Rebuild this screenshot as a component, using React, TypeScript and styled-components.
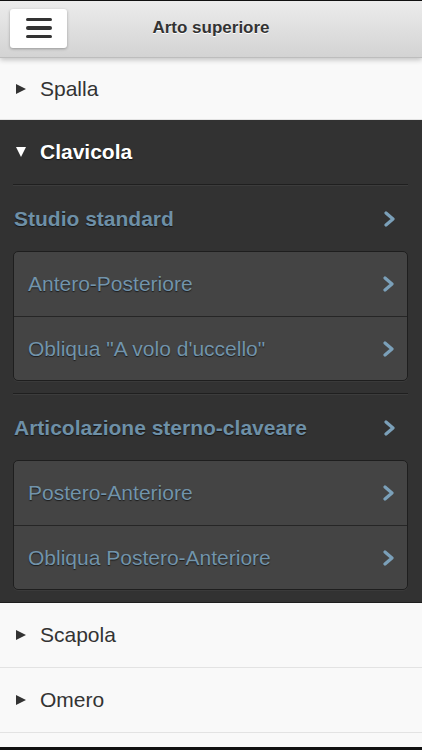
import styled, { createGlobalStyle } from "styled-components";

const GlobalStyle = createGlobalStyle`
  html, body {
    margin: 0;
    padding: 0;
    background: #000;
  }
  * { box-sizing: border-box; }
`;

const Page = styled.div`
  height: 750px;
  display: flex;
  flex-direction: column;
  background: #f9f9f9;
  border-top: 1px solid #111;
  border-bottom: 3px solid #111;
  font-family: "Liberation Sans", Arial, Helvetica, sans-serif;
  overflow: hidden;
`;

const Header = styled.header`
  position: relative;
  z-index: 2;
  height: 57px;
  flex-shrink: 0;
  display: flex;
  align-items: center;
  padding: 0 10px;
  background: linear-gradient(#ececec, #d3d3d3);
  border-bottom: 1px solid #bdbdbd;
  box-shadow: 0 2px 5px rgba(0, 0, 0, 0.22);
`;

const MenuButton = styled.button`
  width: 57px;
  height: 39px;
  margin-top: -2px;
  border: none;
  border-radius: 3px;
  background: #fff;
  box-shadow: 0 1px 3px rgba(0, 0, 0, 0.3);
  display: flex;
  flex-direction: column;
  justify-content: center;
  align-items: center;
  gap: 5px;
  padding: 0;
`;

const Bar = styled.span`
  display: block;
  width: 26px;
  height: 3.5px;
  border-radius: 2px;
  background: #333;
`;

const Title = styled.h1`
  flex: 1;
  margin: -2px 0 0 -57px;
  text-align: center;
  font-size: 17px;
  font-weight: bold;
  color: #333;
  text-shadow: 0 1px 0 #fff;
`;

const Row = styled.div<{ $open?: boolean }>`
  height: 65px;
  flex-shrink: 0;
  display: flex;
  align-items: center;
  gap: 14px;
  padding: 0 16px;
  font-size: 21px;
  color: ${(p) => (p.$open ? "#fff" : "#333")};
  font-weight: ${(p) => (p.$open ? "bold" : "normal")};
  text-shadow: ${(p) => (p.$open ? "0 1px 1px #111" : "none")};
  border-bottom: 1px solid ${(p) => (p.$open ? "#1f1f1f" : "#e3e3e3")};
`;

const LightRow = styled(Row)`
  height: 62px;
`;

const Triangle = styled.span<{ $down?: boolean }>`
  width: 0;
  height: 0;
  ${(p) =>
    p.$down
      ? `border-left: 5.5px solid transparent;
         border-right: 5.5px solid transparent;
         border-top: 10px solid #fff;`
      : `border-top: 5.5px solid transparent;
         border-bottom: 5.5px solid transparent;
         border-left: 10px solid #333;`}
`;

const DarkPanel = styled.section`
  flex-shrink: 0;
  background: #323232;
  padding: 0 14px 12px 13px;
  border-bottom: 1px solid #1e1e1e;
`;

const OpenRow = styled(Row)`
  height: 64px;
  margin: 0 0 0 -13px;
  padding-left: 16px;
  border-bottom: none;
`;

const Divider = styled.div`
  height: 2px;
  border-top: 1px solid #1f1f1f;
  border-bottom: 1px solid #3c3c3c;
`;

const Group = styled.div`
  & + & {
    margin-top: 12px;
  }
`;

const GroupHeader = styled.div`
  height: 65px;
  display: flex;
  align-items: center;
  justify-content: space-between;
  padding: 0 11px 0 1px;
  font-size: 21px;
  font-weight: bold;
  color: #6e90a7;
  text-shadow: 0 1px 1px #161616;
`;

const Card = styled.div`
  border: 1px solid #1e1e1e;
  border-radius: 5px;
  background: #444;
  box-shadow: 0 1px 0 #3a3a3a;
  overflow: hidden;
`;

const CardRow = styled.div`
  height: 64px;
  display: flex;
  align-items: center;
  justify-content: space-between;
  padding: 0 11px 0 14px;
  font-size: 21px;
  color: #7294ab;
  text-shadow: 0 1px 1px #1c1c1c;
  & + & {
    border-top: 1px solid #262626;
  }
`;

const Filler = styled.div`
  flex: 1;
`;

const Chevron = () => (
  <svg width="14" height="16" viewBox="0 0 14 16">
    <polyline
      points="3,2 10,8 3,14"
      fill="none"
      stroke="#7ba0b9"
      strokeWidth="3.2"
      strokeLinecap="round"
      strokeLinejoin="round"
    />
  </svg>
);

const groups = [
  {
    title: "Studio standard",
    items: ["Antero-Posteriore", 'Obliqua "A volo d\'uccello"'],
  },
  {
    title: "Articolazione sterno-claveare",
    items: ["Postero-Anteriore", "Obliqua Postero-Anteriore"],
  },
];

export default function App() {
  return (
    <>
      <GlobalStyle />
      <Page>
        <Header>
          <MenuButton aria-label="Menu">
            <Bar />
            <Bar />
            <Bar />
          </MenuButton>
          <Title>Arto superiore</Title>
        </Header>

        <LightRow>
          <Triangle />
          Spalla
        </LightRow>

        <DarkPanel>
          <OpenRow $open>
            <Triangle $down />
            Clavicola
          </OpenRow>
          {groups.map((g) => (
            <Group key={g.title}>
              <Divider />
              <GroupHeader>
                {g.title}
                <Chevron />
              </GroupHeader>
              <Card>
                {g.items.map((it) => (
                  <CardRow key={it}>
                    {it}
                    <Chevron />
                  </CardRow>
                ))}
              </Card>
            </Group>
          ))}
        </DarkPanel>

        <Row>
          <Triangle />
          Scapola
        </Row>
        <Row>
          <Triangle />
          Omero
        </Row>
        <Filler />
      </Page>
    </>
  );
}
